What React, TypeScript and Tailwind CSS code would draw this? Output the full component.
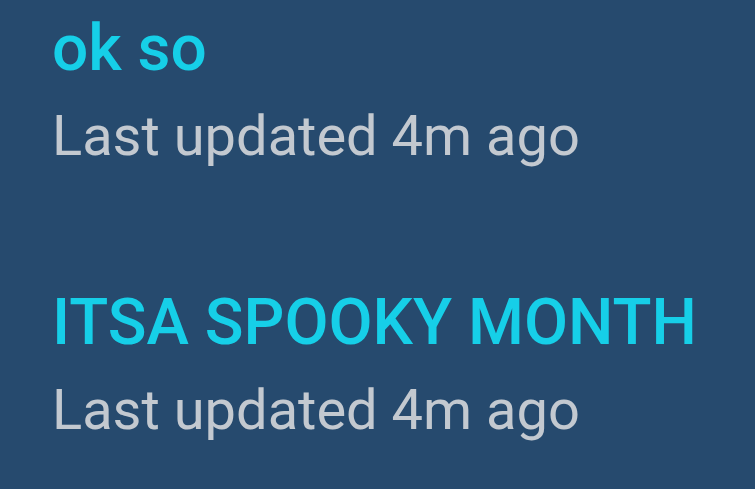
const items = [
  { title: "ok so", updated: "Last updated 4m ago" },
  { title: "ITSA SPOOKY MONTH", updated: "Last updated 4m ago" },
];

export default function App() {
  return (
    <div className="w-[755px] h-[489px] bg-[#264a6e] overflow-hidden pl-[52px] pt-[5px] flex flex-col gap-[99px] font-['Roboto',sans-serif]">
      {items.map((item) => (
        <div key={item.title} className="flex flex-col">
          <h2 className="text-[64px] leading-[88px] font-medium text-[#16cfe8] whitespace-nowrap">{item.title}</h2>
          <p className="text-[56px] leading-[87px] text-[#c3c9d0] whitespace-nowrap">{item.updated}</p>
        </div>
      ))}
    </div>
  );
}
